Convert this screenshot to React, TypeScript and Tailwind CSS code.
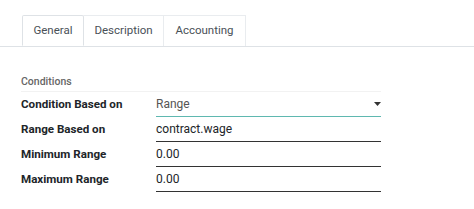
import React from "react";

const rows = [
  { label: "Condition Based on", value: "Range", select: true },
  { label: "Range Based on", value: "contract.wage" },
  { label: "Minimum Range", value: "0.00" },
  { label: "Maximum Range", value: "0.00" },
];

export default function App() {
  return (
    <div className="w-[474px] h-[209px] bg-white overflow-hidden" style={{ fontFamily: "Roboto, 'Noto Sans', sans-serif" }}>
      <div className="pt-[15px] flex pl-[22px] border-b border-[#dee2e6]">
        <div className="h-[31px] w-[62px] justify-center flex items-center text-[11.5px] text-[#495057] bg-white border border-[#dee2e6] border-b-white -mb-px rounded-t-[2px]">General</div>
        <div className="h-[31px] w-[80px] justify-center flex items-center text-[11.5px] text-[#495057] border-t border-r border-[#e9ecef]">Description</div>
        <div className="h-[31px] w-[82px] justify-center flex items-center text-[11.5px] text-[#495057] border-t border-r border-[#e9ecef]">Accounting</div>
      </div>
      <div className="pl-[21px] w-[381px]">
        <div className="mt-[28px] text-[10.5px] font-medium text-[#666] pb-[2px] border-b border-[#f2f2f2] leading-[14px]">Conditions</div>
        <div className="mt-[0px] flex flex-col">
          {rows.map((r) => (
            <div key={r.label} className="flex h-[25px] items-stretch">
              <div className="w-[135px] flex items-center text-[11.6px] font-bold text-[#212529]">{r.label}</div>
              <div className={`flex-1 flex items-center justify-between text-[12px] border-b ${r.select ? "border-[#5fb8b0] text-[#555]" : "border-[#333] text-[#212529]"}`}>
                <span>{r.value}</span>
                {r.select && (
                  <svg width="7" height="4" viewBox="0 0 7 4" className="mr-[0px]">
                    <path d="M0 0 L7 0 L3.5 4 Z" fill="#333" />
                  </svg>
                )}
              </div>
            </div>
          ))}
        </div>
      </div>
    </div>
  );
}
